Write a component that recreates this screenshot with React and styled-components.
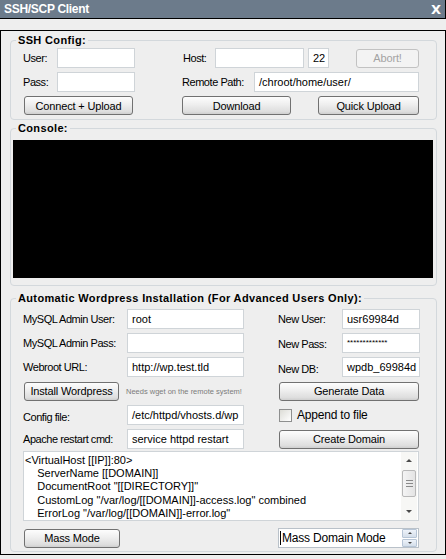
import styled, { createGlobalStyle } from "styled-components";

const GlobalStyle = createGlobalStyle`
  html, body {
    margin: 0;
    padding: 0;
    background: #eeeeee;
  }
  * {
    box-sizing: border-box;
  }
`;

const Window = styled.div`
  width: 446px;
  height: 559px;
  background: #eeeeee;
  font-family: "Liberation Sans", Arial, sans-serif;
  font-size: 11px;
  color: #000;
  overflow: hidden;
`;

const TitleBar = styled.div`
  height: 19px;
  background: #6c7b8b;
  border-right: 1px solid #000;
  border-bottom: 1px solid #000;
  display: flex;
  align-items: center;
  justify-content: space-between;
  padding: 0 4px 0 4px;
  color: #fff;
  font-weight: bold;
`;

const Title = styled.span`
  font-size: 12px;
  letter-spacing: -0.3px;
`;

const Close = styled.span`
  font-size: 13px;
  font-family: "DejaVu Sans", sans-serif;
  font-weight: bold;
`;

const Frame = styled.div`
  margin-top: 11px;
  width: 446px;
  height: 525px;
  border: 1px solid #000;
`;

const Group = styled.fieldset`
  margin: ${(p) => p.$mt}px 8px 0 9px;
  padding: 0 0 ${(p) => p.$pb || 0}px 0;
  border: 1px solid #d3d8dc;
  border-radius: 4px;
  min-width: 0;
`;

const Legend = styled.legend`
  margin-left: 5px;
  padding: 0 2px;
  font-weight: bold;
  font-size: 11px;
  line-height: 13px;
  letter-spacing: 0.35px;
`;

const Row = styled.div`
  display: flex;
  align-items: center;
  height: ${(p) => p.$h || 20}px;
  margin-top: ${(p) => p.$mt}px;
  padding-left: 12px;
`;

const Label = styled.span`
  flex: none;
  width: ${(p) => p.$w}px;
  margin-left: ${(p) => p.$ml || 0}px;
  margin-top: ${(p) => p.$dy || 0}px;
  letter-spacing: -0.45px;
  white-space: nowrap;
`;

const Field = styled.div`
  flex: none;
  width: ${(p) => p.$w}px;
  height: 20px;
  margin-left: ${(p) => p.$ml || 0}px;
  background: #fff;
  border: 1px solid #cfd4d8;
  padding: 0 0 0 4px;
  line-height: 18px;
  white-space: nowrap;
  overflow: hidden;
  font-size: ${(p) => p.$fs || 11}px;
`;

const Button = styled.div`
  flex: none;
  width: ${(p) => p.$w}px;
  height: 19px;
  margin-left: ${(p) => p.$ml || 0}px;
  border: 1px solid ${(p) => (p.$disabled ? "#c2c2c2" : "#717171")};
  border-radius: 3px;
  background: ${(p) =>
    p.$disabled
      ? "#f3f3f3"
      : "linear-gradient(#fdfdfd, #eeeeee 45%, #dedede 85%, #cfcfcf)"};
  color: ${(p) => (p.$disabled ? "#a3a3a3" : "#000")};
  display: flex;
  align-items: center;
  justify-content: center;
  letter-spacing: -0.15px;
  white-space: nowrap;
`;

const Note = styled.span`
  flex: none;
  width: 153px;
  margin-left: 7px;
  font-size: 7.5px;
  color: #7c7c7c;
  white-space: nowrap;
`;

const Console = styled.div`
  margin: 5px 0 7px 2px;
  width: 420px;
  height: 138px;
  background: #000;
`;

const Check = styled.span`
  flex: none;
  width: 13px;
  height: 13px;
  margin-left: 35px;
  border: 1px solid #8e8f8f;
  background: linear-gradient(135deg, #dcdcd6, #ffffff);
`;

const CheckText = styled.span`
  margin-left: 5px;
  font-size: 12px;
  letter-spacing: -0.2px;
`;

const TextBox = styled.div`
  margin: 2px 0 0 12px;
  width: 396px;
  height: 70px;
  background: #fff;
  border: 1px solid #cfd4d8;
  display: flex;
`;

const Code = styled.div`
  flex: 1;
  padding: 2px 0 0 1px;
  line-height: 13.2px;
  white-space: pre;
  overflow: hidden;
`;

const ScrollBar = styled.div`
  width: 16px;
  margin-right: 1px;
  display: flex;
  flex-direction: column;
  background: #f7f7f5;
`;

const ArrowCell = styled.div`
  height: ${(p) => p.$h}px;
  display: flex;
  align-items: center;
  justify-content: center;
`;

const Arrow = styled.span`
  width: 0;
  height: 0;
  border-left: ${(p) => p.$s || 3}px solid transparent;
  border-right: ${(p) => p.$s || 3}px solid transparent;
  ${(p) =>
    p.$up
      ? `border-bottom: ${p.$s || 3}px solid #4a4a4a;`
      : `border-top: ${p.$s || 3}px solid #4a4a4a;`}
`;

const Track = styled.div`
  flex: 1;
  padding: 1px 1px 0 1px;
`;

const Thumb = styled.div`
  height: 27px;
  border: 1px solid #b8b8b8;
  border-radius: 2px;
  background: linear-gradient(90deg, #f4f4f4, #e4e4e4);
  display: flex;
  flex-direction: column;
  align-items: center;
  justify-content: center;
  gap: 2px;
`;

const Grip = styled.span`
  width: 7px;
  height: 1px;
  background: #8a8a8a;
`;

const Spinner = styled.div`
  flex: none;
  width: 141px;
  height: 20px;
  margin-left: 158px;
  background: #fff;
  border: 1px solid #b9c1c9;
  display: flex;
  align-items: center;
  font-size: 12px;
  letter-spacing: -0.2px;
`;

const Caret = styled.span`
  width: 1px;
  height: 14px;
  background: #000;
  margin: 0 1px 0 1px;
`;

const SpinText = styled.span`
  flex: 1;
  white-space: nowrap;
`;

const SpinButtons = styled.div`
  width: 15px;
  height: 18px;
  display: flex;
  flex-direction: column;
  gap: 1px;
  margin-right: 1px;
`;

const SpinBtn = styled.div`
  flex: 1;
  background: linear-gradient(#eef3fa, #d4deea);
  border: 1px solid #b7c5d6;
  border-radius: 1px;
  display: flex;
  align-items: center;
  justify-content: center;
`;

const vhost = `<VirtualHost [[IP]]:80>
    ServerName [[DOMAIN]]
    DocumentRoot "[[DIRECTORY]]"
    CustomLog "/var/log/[[DOMAIN]]-access.log" combined
    ErrorLog "/var/log/[[DOMAIN]]-error.log"`;

export default function App() {
  return (
    <>
      <GlobalStyle />
      <Window>
        <TitleBar>
          <Title>SSH/SCP Client</Title>
          <Close>X</Close>
        </TitleBar>
        <Frame>
          <Group $mt={3} $pb={4}>
            <Legend>SSH Config:</Legend>
            <Row $mt={1}>
              <Label $w={34}>User:</Label>
              <Field $w={78} />
              <Label $w={32} $ml={48}>Host:</Label>
              <Field $w={89} />
              <Field $w={21} $ml={4}>22</Field>
              <Button $w={63} $ml={27} $disabled>Abort!</Button>
            </Row>
            <Row $mt={4}>
              <Label $w={34}>Pass:</Label>
              <Field $w={78} />
              <Label $w={72} $ml={47}>Remote Path:</Label>
              <Field $w={165}>/chroot/home/user/</Field>
            </Row>
            <Row $mt={4} $h={19}>
              <Button $w={109} $ml={1}>Connect + Upload</Button>
              <Button $w={109} $ml={49}>Download</Button>
              <Button $w={101} $ml={27}>Quick Upload</Button>
            </Row>
          </Group>

          <Group $mt={2}>
            <Legend>Console:</Legend>
            <Console />
          </Group>

          <Group $mt={6} $pb={3}>
            <Legend>Automatic Wordpress Installation (For Advanced Users Only):</Legend>
            <Row $mt={4}>
              <Label $w={104}>MySQL Admin User:</Label>
              <Field $w={117}>root</Field>
              <Label $w={64} $ml={34}>New User:</Label>
              <Field $w={78}>usr69984d</Field>
            </Row>
            <Row $mt={4}>
              <Label $w={104}>MySQL Admin Pass:</Label>
              <Field $w={117} />
              <Label $w={64} $ml={34} $dy={2}>New Pass:</Label>
              <Field $w={78} $fs={8}>*************</Field>
            </Row>
            <Row $mt={4}>
              <Label $w={104}>Webroot URL:</Label>
              <Field $w={117}>http://wp.test.tld</Field>
              <Label $w={64} $ml={34} $dy={4}>New DB:</Label>
              <Field $w={78}>wpdb_69984d</Field>
            </Row>
            <Row $mt={4}>
              <Button $w={95} $ml={1}>Install Wordpress</Button>
              <Note>Needs wget on the remote system!</Note>
              <Button $w={140}>Generate Data</Button>
            </Row>
            <Row $mt={4}>
              <Label $w={104} $dy={3}>Config file:</Label>
              <Field $w={117}>/etc/httpd/vhosts.d/wp</Field>
              <Check />
              <CheckText>Append to file</CheckText>
            </Row>
            <Row $mt={4}>
              <Label $w={104}>Apache restart cmd:</Label>
              <Field $w={117}>service httpd restart</Field>
              <Button $w={140} $ml={35}>Create Domain</Button>
            </Row>
            <TextBox>
              <Code>{vhost}</Code>
              <ScrollBar>
                <ArrowCell $h={17}>
                  <Arrow $up />
                </ArrowCell>
                <Track>
                  <Thumb>
                    <Grip />
                    <Grip />
                    <Grip />
                  </Thumb>
                </Track>
                <ArrowCell $h={17}>
                  <Arrow />
                </ArrowCell>
              </ScrollBar>
            </TextBox>
            <Row $mt={7}>
              <Button $w={96} $ml={1}>Mass Mode</Button>
              <Spinner>
                <Caret />
                <SpinText>Mass Domain Mode</SpinText>
                <SpinButtons>
                  <SpinBtn>
                    <Arrow $up $s={2.5} />
                  </SpinBtn>
                  <SpinBtn>
                    <Arrow $s={2.5} />
                  </SpinBtn>
                </SpinButtons>
              </Spinner>
            </Row>
          </Group>
        </Frame>
      </Window>
    </>
  );
}
